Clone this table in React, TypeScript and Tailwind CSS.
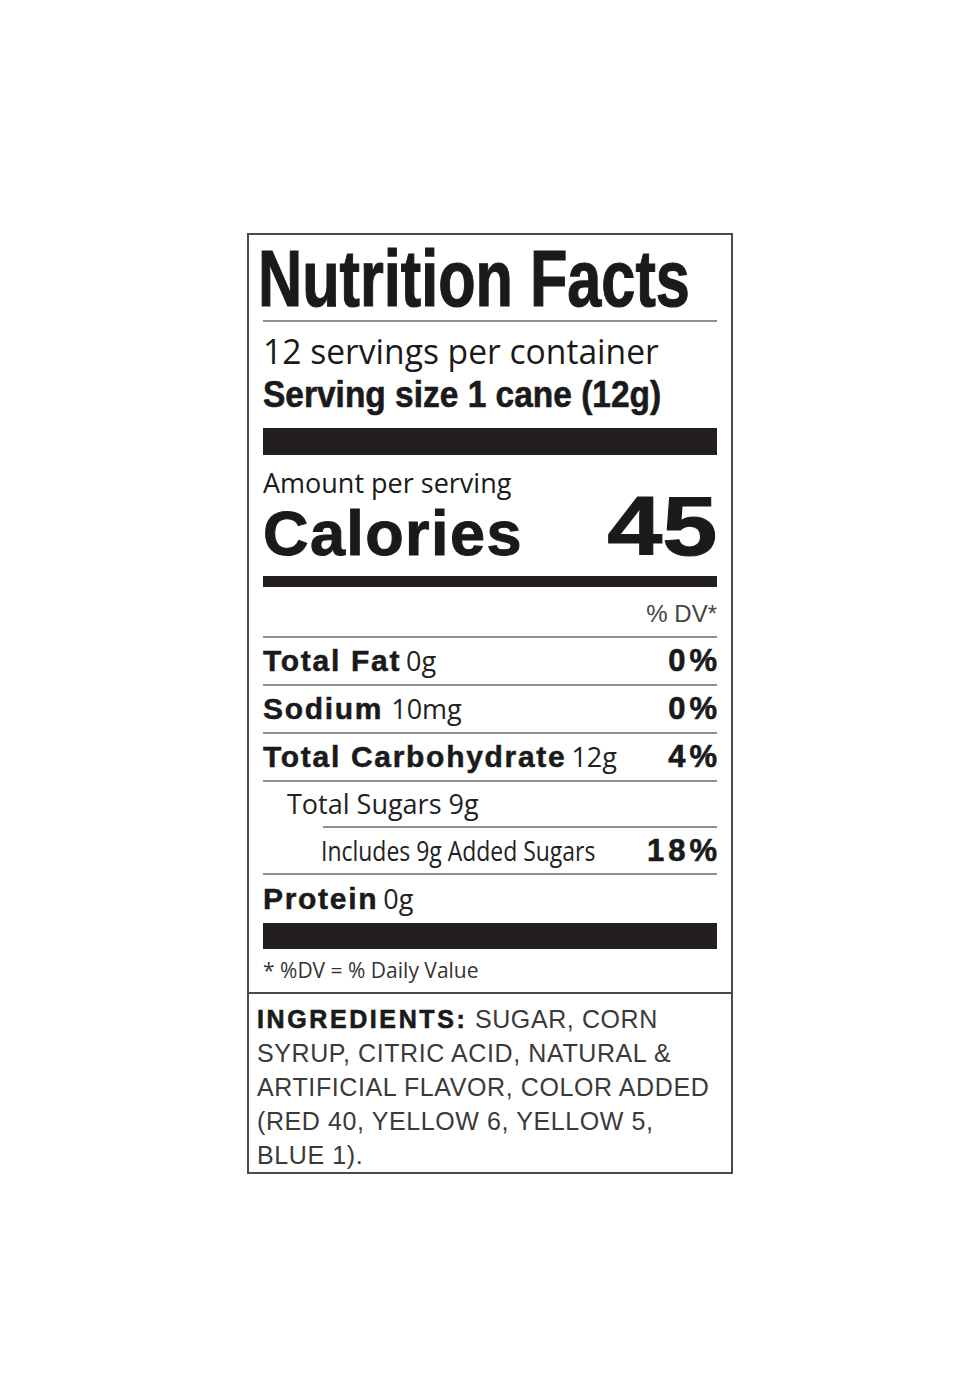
import React from "react";

const ARIAL = "font-['Liberation_Sans',Arial,sans-serif]";
const OPEN = "font-['Open_Sans',sans-serif]";

function Line({ indent = false }: { indent?: boolean }) {
  return <div className={`h-[2px] bg-[#8e8e8e] ${indent ? "ml-[60px]" : ""}`} />;
}

function Label({ children }: { children: React.ReactNode }) {
  return (
    <span
      className={`${ARIAL} font-bold text-[30px] tracking-[1.7px] [-webkit-text-stroke:0.5px_#1a1a1a]`}
    >
      {children}
    </span>
  );
}

function Amount({ children, ml = "ml-[5px]" }: { children: React.ReactNode; ml?: string }) {
  return <span className={`${OPEN} text-[27px] ${ml} text-[#222]`}>{children}</span>;
}

function Pct({ children }: { children: React.ReactNode }) {
  return (
    <span
      className={`${ARIAL} font-bold text-[31px] tracking-[4px] mr-[-4px] [-webkit-text-stroke:0.6px_#1a1a1a]`}
    >
      {children}
    </span>
  );
}

export default function App() {
  return (
    <div className="min-h-[1400px] bg-white pt-[233px]">
      <div className="mx-auto w-[486px] border-2 border-[#4a4a4a] text-[#1a1a1a]">
        {/* Nutrition section */}
        <div className="px-[14px] pt-[4px] pb-[9px] border-b-2 border-[#4a4a4a]">
          <div className={`${ARIAL} font-bold h-[80px] leading-[80px] text-[80px] whitespace-nowrap ml-[-5px]`}>
            <span className="inline-block origin-left scale-x-[0.765] [-webkit-text-stroke:1.2px_#1a1a1a]">
              Nutrition Facts
            </span>
          </div>
          <div className="mt-[1px]">
            <Line />
          </div>
          <div className={`${OPEN} mt-[9px] h-[40px] leading-[40px] text-[35px] whitespace-nowrap`}>
            <span className="inline-block origin-left scale-x-[0.96]">12 servings per container</span>
          </div>
          <div className={`${ARIAL} font-bold mt-[4px] h-[40px] leading-[40px] text-[36px] whitespace-nowrap`}>
            <span className="inline-block origin-left scale-x-[0.93] [-webkit-text-stroke:0.6px_#1a1a1a]">
              Serving size 1 cane (12g)
            </span>
          </div>
          <div className="mt-[13px] h-[27px] bg-[#231f20]" />
          <div className={`${OPEN} mt-[13px] h-[30px] leading-[30px] text-[27px] whitespace-nowrap`}>
            Amount per serving
          </div>
          <div className="h-[62px] flex items-baseline justify-between">
            <span
              className={`${ARIAL} font-bold text-[63px] leading-[56px] tracking-[1.4px] [-webkit-text-stroke:1px_#1a1a1a]`}
            >
              Calories
            </span>
            <span
              className={`${ARIAL} font-bold text-[84px] leading-[56px] inline-block origin-right scale-x-[1.18] [-webkit-text-stroke:1px_#1a1a1a]`}
            >
              45
            </span>
          </div>
          <div className="mt-[16px] h-[11px] bg-[#231f20]" />
          <div className={`${ARIAL} mt-[13px] h-[28px] leading-[28px] text-[24px] text-right text-[#444]`}>
            % DV*
          </div>
          <div className="mt-[8px]">
            <Line />
          </div>
          <div className="h-[46px] leading-[46px] flex items-baseline justify-between">
            <span>
              <Label>Total Fat</Label>
              <Amount>0g</Amount>
            </span>
            <Pct>0%</Pct>
          </div>
          <Line />
          <div className="h-[46px] leading-[46px] flex items-baseline justify-between">
            <span>
              <Label>Sodium</Label>
              <Amount ml="ml-[8px]">10mg</Amount>
            </span>
            <Pct>0%</Pct>
          </div>
          <Line />
          <div className="h-[46px] leading-[46px] flex items-baseline justify-between">
            <span>
              <Label>Total Carbohydrate</Label>
              <Amount>12g</Amount>
            </span>
            <Pct>4%</Pct>
          </div>
          <Line />
          <div className="h-[44px] leading-[44px] flex items-baseline pl-[24px]">
            <span className={`${OPEN} text-[27px] text-[#222]`}>Total Sugars 9g</span>
          </div>
          <Line indent />
          <div className="h-[45px] leading-[45px] flex items-baseline justify-between pl-[58px]">
            <span className={`${OPEN} text-[27px] text-[#222] inline-block origin-left scale-x-[0.85] whitespace-nowrap`}>
              Includes 9g Added Sugars
            </span>
            <Pct>18%</Pct>
          </div>
          <Line />
          <div className="h-[48px] leading-[48px] flex items-baseline">
            <span>
              <Label>Protein</Label>
              <Amount>0g</Amount>
            </span>
          </div>
          <div className="h-[26px] bg-[#231f20]" />
          <div className={`${OPEN} mt-[8px] h-[26px] leading-[26px] text-[21px] text-[#333] whitespace-nowrap`}>
            * %DV = % Daily Value
          </div>
        </div>
        {/* Ingredients */}
        <div className={`${ARIAL} px-[8px] pt-[8px] text-[25px] leading-[34px] tracking-[0.6px] text-[#3a3a3a] whitespace-nowrap`}>
          <div>
            <span className="font-bold tracking-[2.6px] text-[#1a1a1a] [-webkit-text-stroke:0.6px_#1a1a1a]">
              INGREDIENTS:
            </span>{" "}
            SUGAR, CORN
          </div>
          <div>SYRUP, CITRIC ACID, NATURAL &amp;</div>
          <div>ARTIFICIAL FLAVOR, COLOR ADDED</div>
          <div>(RED 40, YELLOW 6, YELLOW 5,</div>
          <div>BLUE 1).</div>
        </div>
      </div>
    </div>
  );
}
